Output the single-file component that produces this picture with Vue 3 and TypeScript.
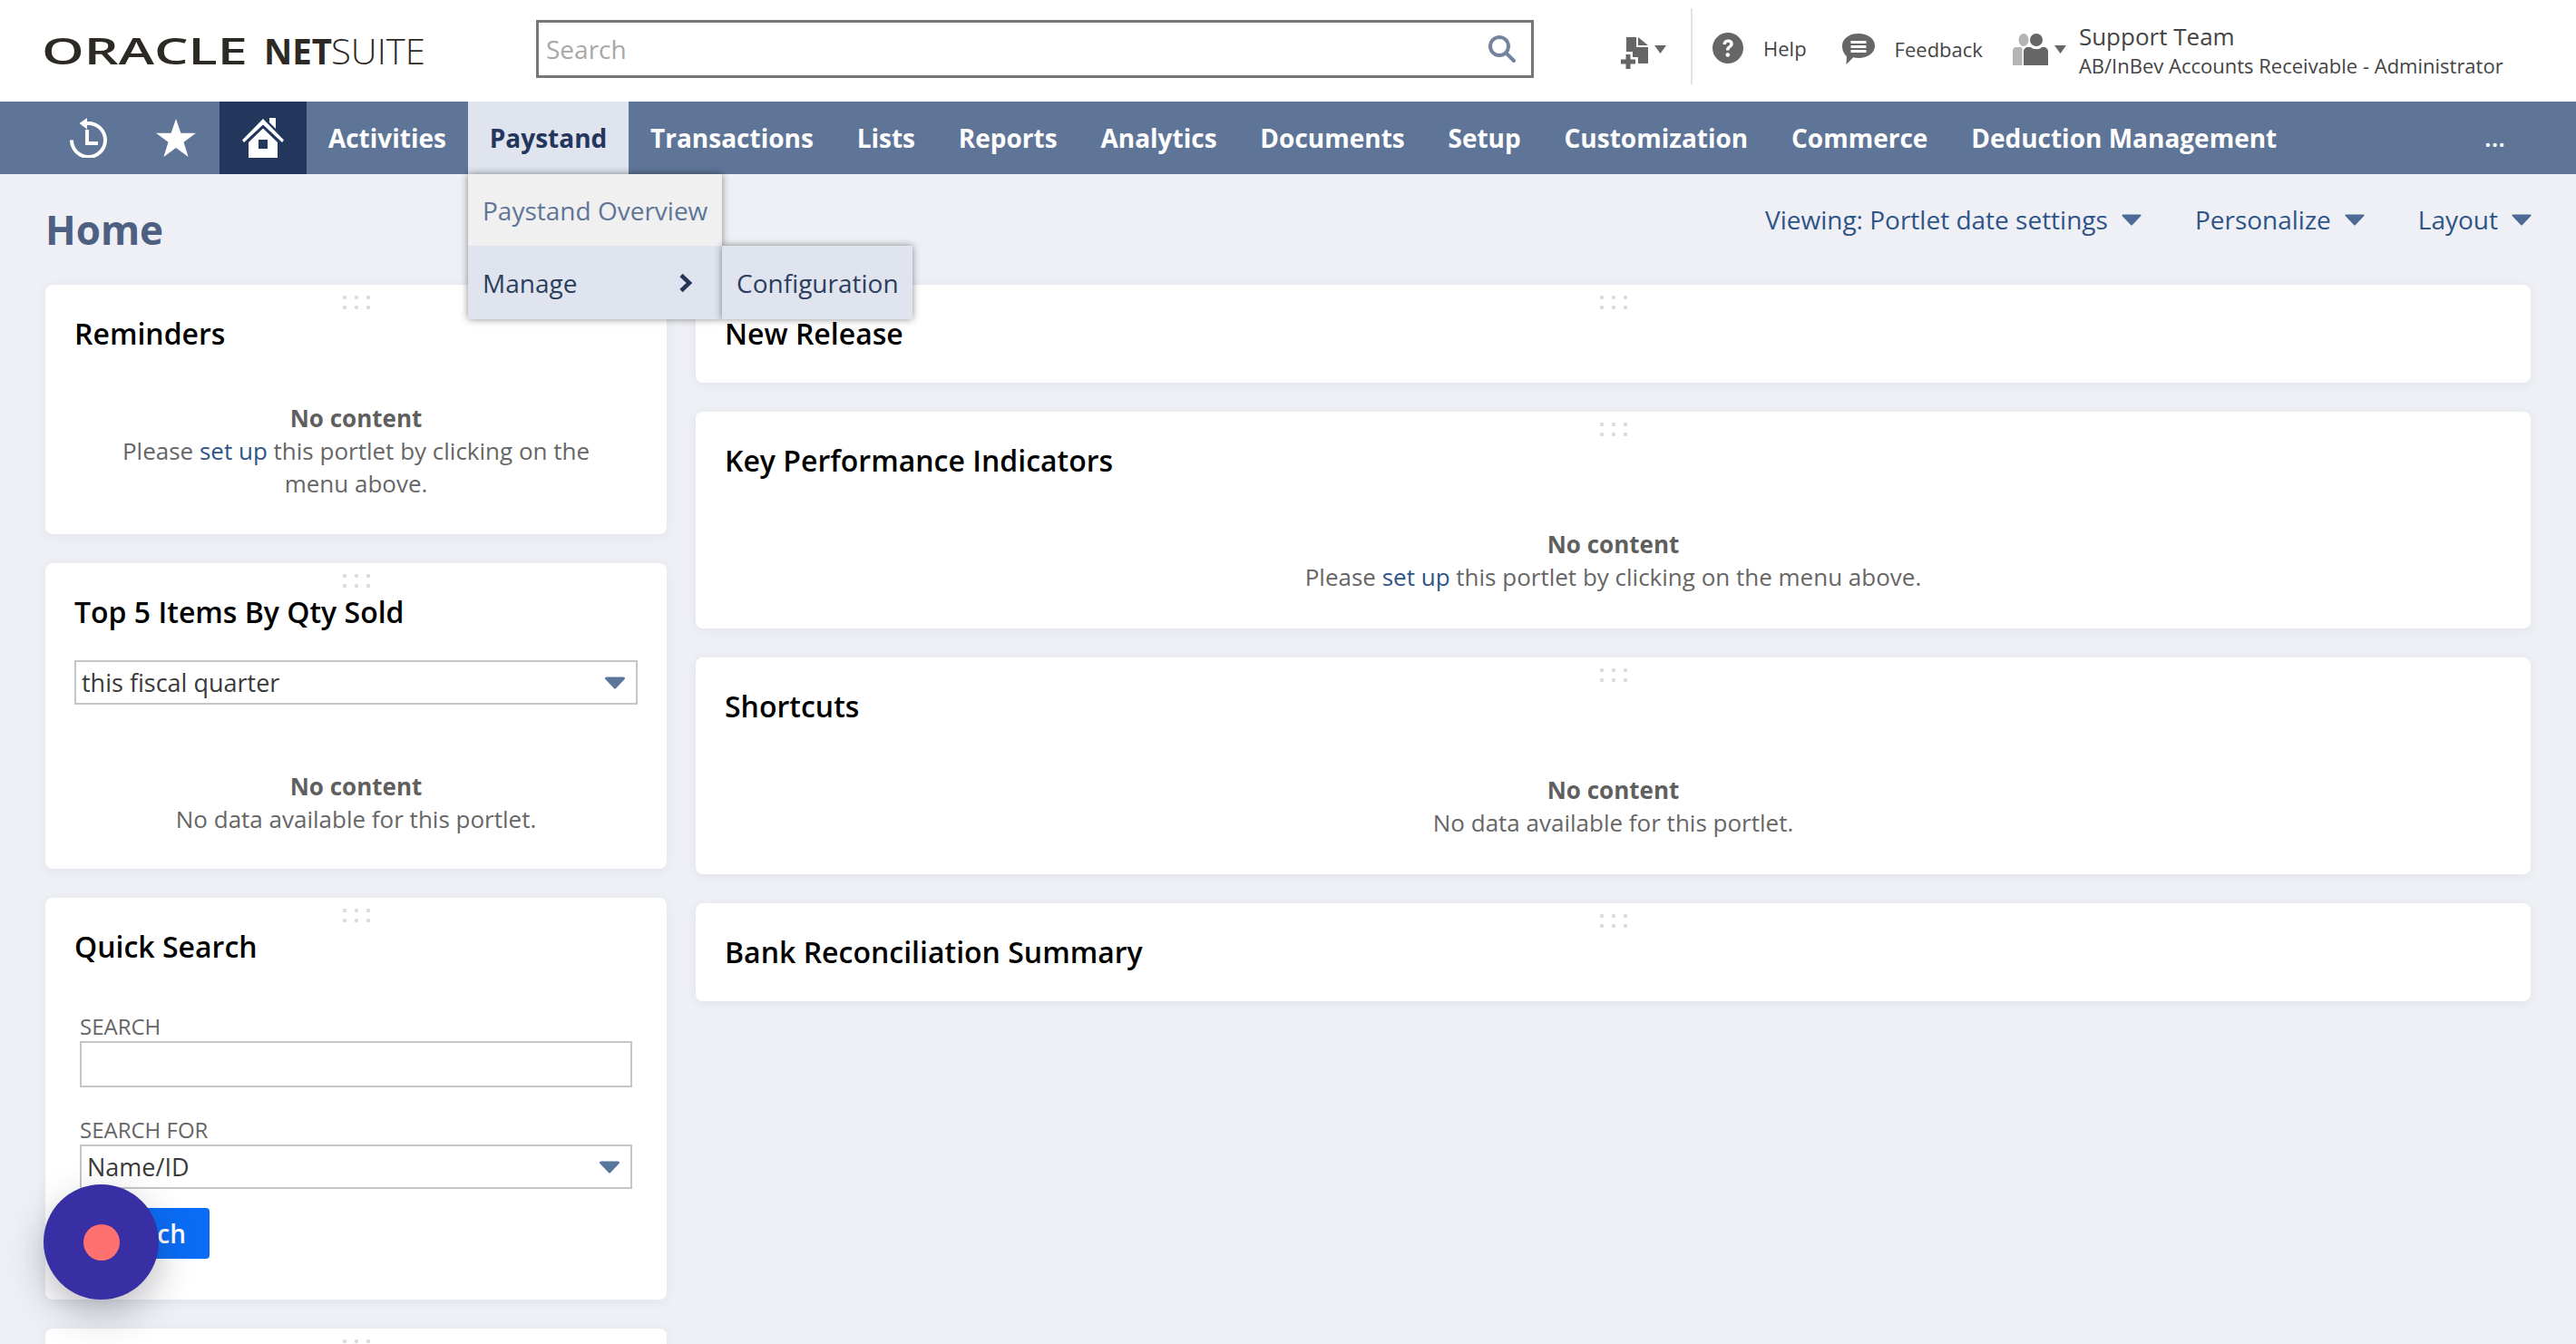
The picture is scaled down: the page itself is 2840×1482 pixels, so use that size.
<script setup lang="ts">
const nav: string[] = ['Activities', 'Paystand', 'Transactions', 'Lists', 'Reports', 'Analytics', 'Documents', 'Setup', 'Customization', 'Commerce', 'Deduction Management']
const dots: number[] = [1, 2, 3, 4, 5, 6]
const viewActions: string[] = ['Viewing: Portlet date settings', 'Personalize', 'Layout']
</script>

<template>
  <div class="page">
    <header class="top">
      <svg class="logo" width="424" height="60" viewBox="0 0 424 60" role="img" aria-label="Oracle NetSuite">
        <text class="logo-oracle" x="-2" y="44" textLength="227" lengthAdjust="spacingAndGlyphs">ORACLE</text>
        <text class="logo-net" x="243" y="44" textLength="75" lengthAdjust="spacingAndGlyphs">NET</text>
        <text class="logo-suite" x="317" y="44" textLength="104" lengthAdjust="spacingAndGlyphs">SUITE</text>
      </svg>
      <div class="search">
        <span class="search-ph">Search</span>
        <svg width="32" height="32" viewBox="0 0 32 32" fill="none" stroke="#74849f" stroke-width="4" stroke-linecap="round"><circle cx="13" cy="13" r="10" /><path d="M20.5 20.5 29 29" /></svg>
      </div>
      <div class="tools">
        <div class="tool new">
          <svg width="50" height="36" viewBox="0 0 50 36" fill="#666">
            <path d="M6 0h11v11h13v18H19v-7h-6v-6H6z" />
            <path d="M19 0l11 9H19z" />
            <path d="M0 24.500h5.500V19h5v5.500H16v5h-5.500V35h-5v-5.500H0z" />
            <path d="M37 9h13l-6.500 9z" />
          </svg>
        </div>
        <span class="divider"></span>
        <div class="tool help">
          <svg width="34" height="34" viewBox="0 0 34 34"><circle cx="17" cy="17" r="17" fill="#666" /><path d="M11.5 13c0-3.300 2.500-5.500 5.800-5.500 3.200 0 5.500 2 5.500 4.800 0 2.200-1.200 3.300-2.700 4.400-1.200.9-1.600 1.400-1.600 2.800h-3.500c0-2.400.8-3.500 2.400-4.700 1.200-.9 1.800-1.500 1.800-2.400 0-1-.8-1.700-2-1.700-1.300 0-2.200.8-2.200 2.300z" fill="#fff" /><circle cx="16.800" cy="24.500" r="2.300" fill="#fff" /></svg>
          <span>Help</span>
        </div>
        <div class="tool feedback">
          <svg width="36" height="34" viewBox="0 0 36 34"><path d="M18 0c10 0 18 5.500 18 13.500S28 27 18 27c-2 0-4-.2-5.800-.7L4.500 34l.4-9C1.800 22.500 0 18.500 0 13.500 0 5.500 8 0 18 0z" fill="#666" /><path d="M9.500 8h17v3h-17zM9.500 13h17v3h-17zM9.500 18h17v3h-17z" fill="#fff" /></svg>
          <span>Feedback</span>
        </div>
        <div class="tool users">
          <svg width="60" height="36" viewBox="0 0 60 36">
            <ellipse cx="13" cy="7" rx="5.500" ry="7" fill="#b5b5b5" />
            <path d="M1 35V19c0-2 1-3.500 3-4h6l1.500 1.500V35z" fill="#b5b5b5" />
            <circle cx="27" cy="7" r="7" fill="#666" />
            <path d="M13 35V20c0-3 2-5 5-5h3c2 3 10 3 12 0h2c3 0 5 2 5 5v15z" fill="#666" />
            <path d="M47 13h13l-6.500 9z" fill="#666" />
          </svg>
        </div>
        <div class="who">
          <div class="who-name">Support Team</div>
          <div class="who-role">AB/InBev Accounts Receivable - Administrator</div>
        </div>
      </div>
    </header>

    <nav class="nav">
      <div class="nav-icons">
        <span class="nav-icon">
          <svg width="42" height="44" viewBox="0 0 42 44" fill="none" stroke="#fff" stroke-width="4">
            <path d="M2 24.500A18.500 18.500 0 1 0 20 6h-4" />
            <path d="M19 0 10.500 6 19 12.500z" fill="#fff" stroke="none" />
            <path d="M19 13v15h12" />
          </svg>
        </span>
        <span class="nav-icon">
          <svg width="44" height="42" viewBox="0 0 44 42"><path d="M22 0l5.400 15.800H44L30.500 25.800 35.600 42 22 32 8.400 42l5.100-16.200L0 15.800h16.600z" fill="#fff" /></svg>
        </span>
        <span class="nav-icon home">
          <svg width="46" height="44" viewBox="0 0 46 44">
            <path d="M30 0h7v12l-7-7z" fill="#fff" />
            <path d="M23 1 46 24.500l-2 2.500L23 7.500 2 27l-2-2.500z" fill="#fff" />
            <path d="M23 11.500 39 27v17H7V27zM18 24v10h10V24z" fill="#fff" fill-rule="evenodd" />
          </svg>
        </span>
      </div>
      <a v-for="item in nav" :key="item" class="nav-item" :class="{ active: item === 'Paystand' }">{{ item }}</a>
      <span class="nav-more">...</span>

      <div class="menu">
        <div class="menu-row overview">Paystand Overview</div>
        <div class="menu-row manage">
          <span>Manage</span>
          <svg width="16" height="22" viewBox="0 0 16 22" fill="none" stroke="#24365c" stroke-width="4.500"><path d="M3 2.500 12 11 3 19.500" /></svg>
        </div>
        <div class="submenu">Configuration</div>
      </div>
    </nav>

    <main class="main">
      <div class="head">
        <h1 class="title">Home</h1>
        <div class="actions">
          <span v-for="a in viewActions" :key="a" class="action">
            {{ a }}
            <svg width="22" height="13" viewBox="0 0 22 13"><path d="M1.500 1.500h19L11 11.500z" fill="#4d6b95" stroke="#4d6b95" stroke-width="2" stroke-linejoin="round" /></svg>
          </span>
        </div>
      </div>

      <div class="cols">
        <div class="col">
          <section class="card reminders">
            <div class="drag"><i v-for="d in dots" :key="d"></i></div>
            <h2>Reminders</h2>
            <div class="empty">
              <b>No content</b>
              <p>Please <a>set up</a> this portlet by clicking on the menu above.</p>
            </div>
          </section>

          <section class="card top5">
            <div class="drag"><i v-for="d in dots" :key="d"></i></div>
            <h2>Top 5 Items By Qty Sold</h2>
            <div class="select">
              <span>this fiscal quarter</span>
              <svg class="sel-caret" width="24" height="14" viewBox="0 0 24 14"><path d="M2.500 2h19L12 12z" fill="#5b769b" stroke="#5b769b" stroke-width="3" stroke-linejoin="round" /></svg>
            </div>
            <div class="empty">
              <b>No content</b>
              <p>No data available for this portlet.</p>
            </div>
          </section>

          <section class="card quick">
            <div class="drag"><i v-for="d in dots" :key="d"></i></div>
            <h2>Quick Search</h2>
            <div class="form">
              <label>SEARCH</label>
              <div class="input"></div>
              <label class="second">SEARCH FOR</label>
              <div class="select">
                <span>Name/ID</span>
                <svg class="sel-caret" width="24" height="14" viewBox="0 0 24 14"><path d="M2.500 2h19L12 12z" fill="#5b769b" stroke="#5b769b" stroke-width="3" stroke-linejoin="round" /></svg>
              </div>
              <button class="btn">Search</button>
            </div>
          </section>

          <section class="card stub">
            <div class="drag"><i v-for="d in dots" :key="d"></i></div>
          </section>
        </div>

        <div class="col">
          <section class="card release">
            <div class="drag"><i v-for="d in dots" :key="d"></i></div>
            <h2>New Release</h2>
          </section>
          <section class="card kpi">
            <div class="drag"><i v-for="d in dots" :key="d"></i></div>
            <h2>Key Performance Indicators</h2>
            <div class="empty">
              <b>No content</b>
              <p>Please <a>set up</a> this portlet by clicking on the menu above.</p>
            </div>
          </section>
          <section class="card kpi">
            <div class="drag"><i v-for="d in dots" :key="d"></i></div>
            <h2>Shortcuts</h2>
            <div class="empty">
              <b>No content</b>
              <p>No data available for this portlet.</p>
            </div>
          </section>
          <section class="card release">
            <div class="drag"><i v-for="d in dots" :key="d"></i></div>
            <h2>Bank Reconciliation Summary</h2>
          </section>
        </div>
      </div>
    </main>

    <div class="fab"><span></span></div>
  </div>
</template>

<style>
html, body { margin: 0; background: #eef0f5; }
</style>

<style scoped>
.page {
  position: relative;
  height: 1482px;
  overflow: hidden;
  background: #eef0f5;
  font-family: "Open Sans", "Noto Sans", sans-serif;
  color: #666;
}
.top {
  height: 112px;
  background: #fff;
  display: flex;
  align-items: center;
  padding: 0 60px 0 48px;
  box-sizing: border-box;
}
.logo { width: 424px; flex: none; margin-top: 2px; overflow: visible; }
.logo text { fill: #2d2a26; font-size: 39px; }
.logo-oracle { font-family: "Open Sans", sans-serif; font-weight: 600; }
.logo-net { font-family: "Open Sans", sans-serif; font-weight: 700; }
.logo-suite { font-family: "Open Sans", sans-serif; font-weight: 300; }
.search {
  margin-left: 119px;
  width: 1100px;
  height: 64px;
  box-sizing: border-box;
  border: 3px solid #777;
  display: flex;
  align-items: center;
  justify-content: space-between;
  padding: 0 16px 0 8px;
  flex: none;
  margin-top: -4px;
}
.search-ph { font-size: 28px; color: #a8a8a8; }
.tools { display: flex; align-items: center; flex: none; margin-left: 96px; font-size: 22px; color: #444; }
.tool { display: flex; align-items: center; }
.new { margin-top: 6px; }
.divider { width: 2px; height: 84px; background: #e2e2e2; margin: -10px 22px 0 27px; }
.help { gap: 22px; margin-top: -6px; }
.feedback { gap: 22px; margin-left: 39px; margin-top: -4px; }
.users { margin-left: 32px; margin-top: -2px; }
.who { margin-left: 14px; margin-top: -2px; }
.who-name { font-size: 26px; line-height: 34px; color: #444; }
.who-role { font-size: 22px; line-height: 30px; color: #444; }

.nav {
  position: relative;
  height: 80px;
  background: #5f7598;
  display: flex;
  align-items: stretch;
  padding-left: 50px;
}
.nav-icons { display: flex; }
.nav-icon { display: flex; align-items: center; justify-content: center; width: 96px; }
.nav-icon.home { background: #23365c; }
.nav-item {
  display: flex;
  align-items: center;
  padding: 0 23.9px;
  font-size: 28px;
  font-weight: 700;
  color: #fff;
}
.nav-item.active { background: #dfe4ee; color: #24365c; }
.nav-more { position: absolute; left: 2739px; top: 20px; color: #fff; font-size: 28px; font-weight: 600; }
.menu {
  position: absolute;
  left: 516px;
  top: 80px;
  width: 280px;
  box-shadow: 0 0 8px rgba(0, 0, 0, .45);
  z-index: 3;
}
.menu-row {
  box-sizing: border-box;
  display: flex;
  align-items: center;
  justify-content: space-between;
  padding: 0 32px 0 16px;
  font-size: 28px;
  white-space: nowrap;
}
.overview { background: #f0f0f0; color: #5f7598; height: 79px; }
.manage { background: #dfe4ee; color: #2c3e5e; height: 81px; }
.submenu {
  position: absolute;
  left: 280px;
  top: 79px;
  width: 210px;
  height: 81px;
  box-sizing: border-box;
  display: flex;
  align-items: center;
  padding-left: 16px;
  background: #dfe4ee;
  color: #2c3e5e;
  font-size: 28px;
  box-shadow: 0 0 8px rgba(0, 0, 0, .45);
}

.main { padding: 0 50px; }
.head { height: 122px; display: flex; justify-content: space-between; position: relative; }
.title { margin: 38px 0 0; font-size: 44px; line-height: 46px; font-weight: 700; color: #4d6081; }
.actions { display: flex; gap: 59px; margin: 30px -1px 0 0; height: 40px; align-items: center; }
.action { font-size: 28px; color: #2f5488; display: flex; align-items: center; gap: 15px; }

.cols { display: grid; grid-template-columns: 685px 2023px; gap: 32px; }
.col { display: flex; flex-direction: column; gap: 32px; }
.card {
  position: relative;
  background: #fff;
  border-radius: 8px;
  box-shadow: 0 2px 12px rgba(40, 50, 80, .07);
  padding: 32px 32px 0;
  box-sizing: border-box;
}
.card h2 { margin: 0; font-size: 32px; line-height: 44px; font-weight: 600; color: #000; }
.drag {
  position: absolute;
  top: 12px;
  left: 50%;
  transform: translateX(-50%);
  display: grid;
  grid-template-columns: repeat(3, 4px);
  gap: 7px 9px;
}
.drag i { width: 4px; height: 4px; background: #dcdcdc; border-radius: 1px; }
.empty { text-align: center; font-size: 26px; line-height: 36px; color: #666; }
.empty b { display: block; font-weight: 700; color: #5f5f5f; }
.empty p { margin: 0; }
.empty a { color: #2f5488; }
.reminders { height: 275px; }
.reminders .empty { margin-top: 53px; padding: 0 30px; }
.top5 { height: 337px; }
.select {
  box-sizing: border-box;
  height: 49px;
  border: 2px solid #c6c6c6;
  display: flex;
  align-items: center;
  justify-content: space-between;
  padding: 0 11px 0 6px;
  font-size: 27px;
  color: #3a3a3a;
}
.top5 .select { margin-top: 31px; }
.top5 .empty { margin-top: 72px; }
.sel-caret { flex: none; }
.quick { height: 443px; }
.form { padding: 0 6px; margin-top: 50px; display: flex; flex-direction: column; }
.form label { font-size: 24px; line-height: 32px; color: #666; }
.input { box-sizing: border-box; height: 51px; border: 2px solid #c6c6c6; }
.form .second { margin-top: 31px; }
.btn {
  align-self: flex-start;
  margin-top: 21px;
  height: 56px;
  width: 143px;
  border: 0;
  border-radius: 4px;
  background: #0a6cf5;
  color: #fff;
  font-family: inherit;
  font-size: 28px;
  font-weight: 600;
  text-align: right;
  padding: 0 26px 0 0;
}
.stub { height: 100px; }
.release { height: 108px; }
.kpi { height: 239px; }
.kpi .empty { margin-top: 52px; }

.fab {
  position: absolute;
  left: 48px;
  top: 1306px;
  width: 127px;
  height: 127px;
  border-radius: 50%;
  background: #372fa3;
  display: flex;
  align-items: center;
  justify-content: center;
  box-shadow: 0 16px 40px rgba(40, 40, 60, .3);
}
.fab span { width: 40px; height: 40px; border-radius: 50%; background: #ff7070; }
</style>
